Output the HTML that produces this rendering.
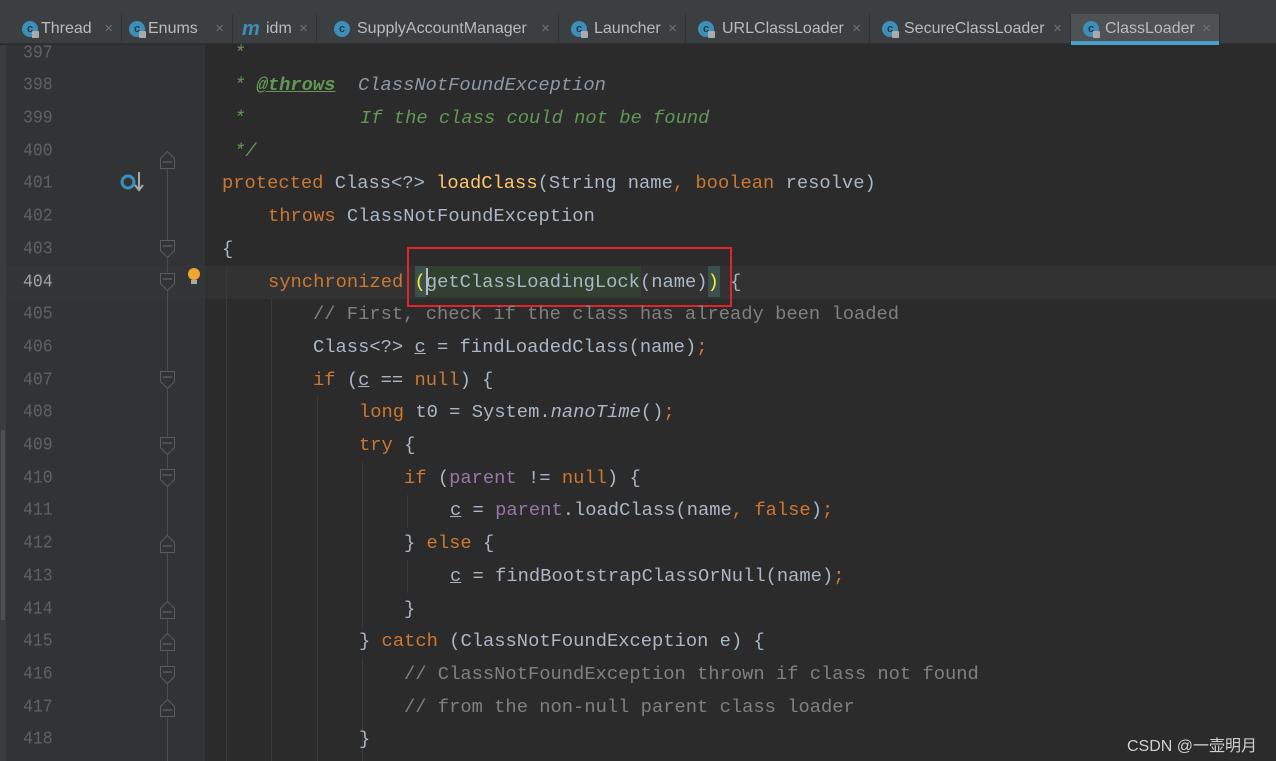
<!DOCTYPE html>
<html><head><meta charset="utf-8"><style>
*{margin:0;padding:0;box-sizing:border-box}
body{width:1276px;height:761px;overflow:hidden;background:#2b2b2b;position:relative;font-family:"Liberation Mono",monospace}
#top{position:absolute;left:0;top:0;width:1276px;height:14px;background:#3c3f41}
#tabs{position:absolute;left:0;top:14px;width:1276px;height:30px;background:#3c3f41;border-bottom:1px solid #323232}
.tab{position:absolute;top:0;height:30px;font:16px "Liberation Sans",sans-serif;color:#bbbbbb;line-height:30px;border-right:1px solid #323232}
.tab .ic{position:absolute;left:7px;top:7px;width:16px;height:16px;border-radius:50%;background:#3d8fb8;color:#1e3a4a;font-size:11px;line-height:16px;text-align:center;font-weight:bold}
.tab .lk{position:absolute;left:17px;top:17px;width:7px;height:7px;background:#aaa;border-radius:1px}
.tab .t{position:absolute;left:26px}
.tab .x{position:absolute;right:8px;color:#6f7274;font-size:15px}
.tab.act{background:#4e5254}
.tab.act:after{content:"";position:absolute;left:0;right:0;bottom:-1px;height:4px;background:#4aa0c8}
#gut{position:absolute;left:6px;top:45px;width:199px;height:716px;background:#313335}
#sb{position:absolute;left:0;top:45px;width:6px;height:716px;background:#3a3c3e}
#sb2{position:absolute;left:1px;top:430px;width:4px;height:190px;background:#4d4f51}
.row{position:absolute;left:0;width:1276px;height:32.7px;line-height:32.7px;font-size:18.8px;white-space:pre}
.ln{position:absolute;left:23px;color:#5f6264;font-size:16.5px;display:inline-block;transform:scaleY(1.12);transform-origin:0 50%}
.cd{position:absolute;left:222px;color:#a9b7c6}
.k{color:#cc7832}.cm{color:#808080}.dc{color:#629755;font-style:italic}.dt{color:#629755;font-weight:bold;font-style:italic;text-decoration:underline}.dv{color:#8a9aa6;font-style:italic}
.m{color:#ffc66d}.f{color:#9876aa}.u{text-decoration:underline}.i{font-style:italic}
.g{position:absolute;width:1px;background:#393939}
</style></head><body>
<div id="top"></div>
<div id="tabs">
<div class="tab" style="left:15px;width:107px"><span class="ic">c</span><span class="lk"></span><span class="t">Thread</span><span class="x">×</span></div>
<div class="tab" style="left:122px;width:111px"><span class="ic">c</span><span class="lk"></span><span class="t">Enums</span><span class="x">×</span></div>
<div class="tab" style="left:233px;width:84px"><span style="position:absolute;left:9px;color:#3d8fb8;font-weight:bold;font-style:italic;font-size:20px">m</span><span class="t" style="left:33px">idm</span><span class="x">×</span></div>
<div class="tab" style="left:317px;width:242px"><span class="ic" style="left:17px">c</span><span class="t" style="left:40px">SupplyAccountManager</span><span class="x">×</span></div>
<div class="tab" style="left:559px;width:127px"><span class="ic" style="left:12px">c</span><span class="lk" style="left:22px"></span><span class="t" style="left:35px">Launcher</span><span class="x">×</span></div>
<div class="tab" style="left:686px;width:184px"><span class="ic" style="left:12px">c</span><span class="lk" style="left:22px"></span><span class="t" style="left:36px">URLClassLoader</span><span class="x">×</span></div>
<div class="tab" style="left:870px;width:201px"><span class="ic" style="left:12px">c</span><span class="lk" style="left:22px"></span><span class="t" style="left:34px">SecureClassLoader</span><span class="x">×</span></div>
<div class="tab act" style="left:1071px;width:149px"><span class="ic" style="left:12px">c</span><span class="lk" style="left:22px"></span><span class="t" style="left:34px">ClassLoader</span><span class="x">×</span></div>
</div>
<div id="sb"></div><div id="sb2"></div>
<div id="gut"></div>
<div style="position:absolute;left:205px;top:265.9px;width:1071px;height:32.7px;background:#323232"></div>
<div style="position:absolute;left:6px;top:265.9px;width:199px;height:32.7px;background:#333537"></div>
<div style="position:absolute;left:167px;top:160px;width:1px;height:601px;background:#4a4c4e"></div>
<div class="g" style="left:226px;top:266px;height:495px"></div>
<div class="g" style="left:271px;top:298px;height:463px"></div>
<div class="g" style="left:317px;top:396px;height:365px"></div>
<div class="g" style="left:362px;top:462px;height:166px"></div>
<div class="g" style="left:407px;top:495px;height:33px;background:#3a3a3a"></div>
<div class="g" style="left:407px;top:560px;height:33px;background:#3a3a3a"></div>
<div class="g" style="left:362px;top:658px;height:103px"></div>
<div style="position:absolute;left:415px;top:266px;width:226px;height:31px;background:#32412f"></div>
<div style="position:absolute;left:415px;top:266px;width:11px;height:31px;background:#3b514d"></div>
<div style="position:absolute;left:708px;top:266px;width:12px;height:31px;background:#3b514d"></div>
<div style="position:absolute;left:426px;top:268px;width:2px;height:27px;background:#bbbbbb"></div>
<div style="position:absolute;left:407px;top:247px;width:325px;height:60px;border:2px solid #e0262a"></div>
<svg style="position:absolute;left:0;top:0" width="260" height="761">
<g fill="#313335" stroke="#5a5c5e" stroke-width="1">
<path d="M160.5 158.5 L167.5 151.5 L174.5 158.5 V168.5 H160.5 Z"/>
<path d="M160.5 240.5 H174.5 V250.5 L167.5 257.5 L160.5 250.5 Z"/>
<path d="M160.5 273.5 H174.5 V283.5 L167.5 290.5 L160.5 283.5 Z"/>
<path d="M160.5 371.5 H174.5 V381.5 L167.5 388.5 L160.5 381.5 Z"/>
<path d="M160.5 437.5 H174.5 V447.5 L167.5 454.5 L160.5 447.5 Z"/>
<path d="M160.5 469.5 H174.5 V479.5 L167.5 486.5 L160.5 479.5 Z"/>
<path d="M160.5 542.5 L167.5 535.5 L174.5 542.5 V552.5 H160.5 Z"/>
<path d="M160.5 608.5 L167.5 601.5 L174.5 608.5 V618.5 H160.5 Z"/>
<path d="M160.5 640.5 L167.5 633.5 L174.5 640.5 V650.5 H160.5 Z"/>
<path d="M160.5 666.5 H174.5 V676.5 L167.5 683.5 L160.5 676.5 Z"/>
<path d="M160.5 706.5 L167.5 699.5 L174.5 706.5 V716.5 H160.5 Z"/>
</g>
<g stroke="#6a6c6e"><path d="M163 162h9M163 246h9M163 279h9M163 377h9M163 443h9M163 475h9M163 546h9M163 612h9M163 644h9M163 672h9M163 710h9"/></g>
<circle cx="128" cy="182" r="6" fill="none" stroke="#3d8fb8" stroke-width="3"/>
<path d="M139 172v17M135 185l4 5 4-5" stroke="#aaa" stroke-width="2" fill="none"/>
<circle cx="194" cy="274" r="6" fill="#f0a732"/><rect x="191" y="280" width="6" height="4" fill="#aaa"/>
</svg>
<div class="row" style="top:36.6px"><span class="ln">397</span><span class="cd" style="left:234px"><span class="dc">*</span></span></div>
<div class="row" style="top:69.3px"><span class="ln">398</span><span class="cd" style="left:234px"><span class="dc">* </span><span class="dt">@throws</span>  <span class="dv">ClassNotFoundException</span></span></div>
<div class="row" style="top:102px"><span class="ln">399</span><span class="cd" style="left:234px"><span class="dc">*</span></span><span class="cd" style="left:360px"><span class="dc">If the class could not be found</span></span></div>
<div class="row" style="top:134.7px"><span class="ln">400</span><span class="cd" style="left:234px"><span class="dc">*/</span></span></div>
<div class="row" style="top:167.4px"><span class="ln">401</span><span class="cd"><span class="k">protected</span> Class&lt;?&gt; <span class="m">loadClass</span>(String name<span class="k">,</span> <span class="k">boolean</span> resolve)</span></div>
<div class="row" style="top:200.1px"><span class="ln">402</span><span class="cd" style="left:268px"><span class="k">throws</span> ClassNotFoundException</span></div>
<div class="row" style="top:232.8px"><span class="ln">403</span><span class="cd">{</span></div>
<div class="row" style="top:265.5px"><span class="ln" style="color:#a4a3a3">404</span><span class="cd" style="left:268px"><span class="k">synchronized</span> <span style="color:#ffef28">(</span>getClassLoadingLock(name)<span style="color:#ffef28">)</span> {</span></div>
<div class="row" style="top:298.2px"><span class="ln">405</span><span class="cd" style="left:313px"><span class="cm">// First, check if the class has already been loaded</span></span></div>
<div class="row" style="top:330.9px"><span class="ln">406</span><span class="cd" style="left:313px">Class&lt;?&gt; <span class="u">c</span> = findLoadedClass(name)<span class="k">;</span></span></div>
<div class="row" style="top:363.6px"><span class="ln">407</span><span class="cd" style="left:313px"><span class="k">if</span> (<span class="u">c</span> == <span class="k">null</span>) {</span></div>
<div class="row" style="top:396.3px"><span class="ln">408</span><span class="cd" style="left:359px"><span class="k">long</span> t0 = System.<span class="i">nanoTime</span>()<span class="k">;</span></span></div>
<div class="row" style="top:429px"><span class="ln">409</span><span class="cd" style="left:359px"><span class="k">try</span> {</span></div>
<div class="row" style="top:461.7px"><span class="ln">410</span><span class="cd" style="left:404px"><span class="k">if</span> (<span class="f">parent</span> != <span class="k">null</span>) {</span></div>
<div class="row" style="top:494.4px"><span class="ln">411</span><span class="cd" style="left:450px"><span class="u">c</span> = <span class="f">parent</span>.loadClass(name<span class="k">,</span> <span class="k">false</span>)<span class="k">;</span></span></div>
<div class="row" style="top:527.1px"><span class="ln">412</span><span class="cd" style="left:404px">} <span class="k">else</span> {</span></div>
<div class="row" style="top:559.8px"><span class="ln">413</span><span class="cd" style="left:450px"><span class="u">c</span> = findBootstrapClassOrNull(name)<span class="k">;</span></span></div>
<div class="row" style="top:592.5px"><span class="ln">414</span><span class="cd" style="left:404px">}</span></div>
<div class="row" style="top:625.2px"><span class="ln">415</span><span class="cd" style="left:359px">} <span class="k">catch</span> (ClassNotFoundException e) {</span></div>
<div class="row" style="top:657.9px"><span class="ln">416</span><span class="cd" style="left:404px"><span class="cm">// ClassNotFoundException thrown if class not found</span></span></div>
<div class="row" style="top:690.6px"><span class="ln">417</span><span class="cd" style="left:404px"><span class="cm">// from the non-null parent class loader</span></span></div>
<div class="row" style="top:723.3px"><span class="ln">418</span><span class="cd" style="left:359px">}</span></div>
<div style="position:absolute;left:1127px;top:732px;font:16px 'Liberation Sans','Noto Sans CJK SC',sans-serif;color:#d0d0d0">CSDN @一壶明月</div>
</body></html>
